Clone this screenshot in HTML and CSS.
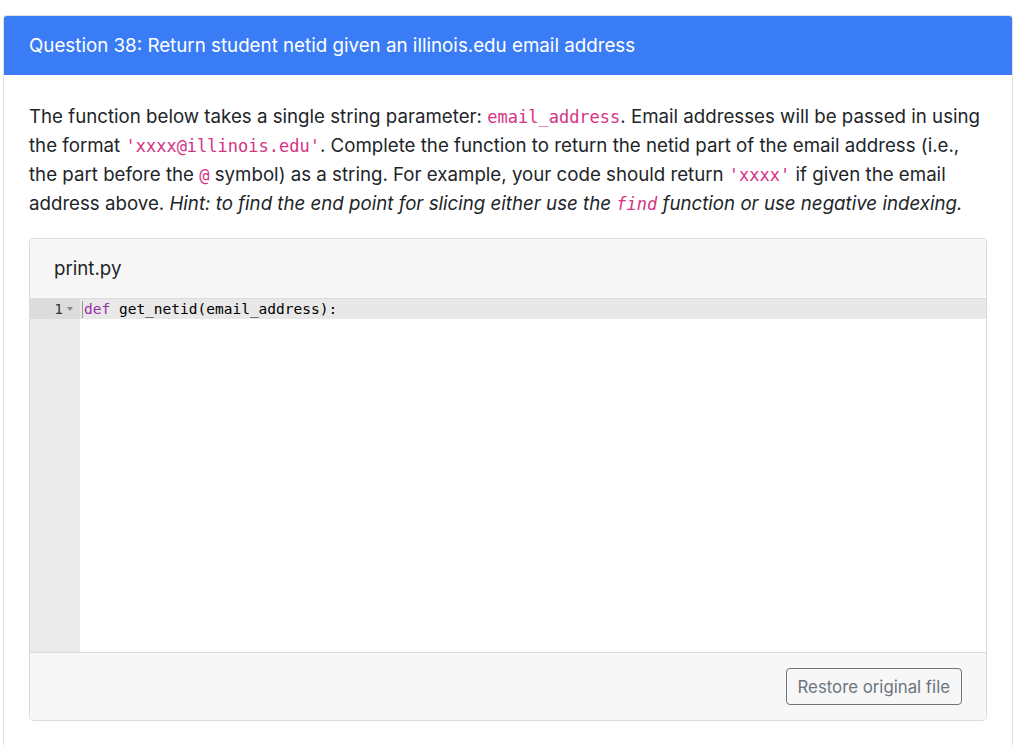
FILE: index.html
```html
<!DOCTYPE html>
<html>
<head>
<meta charset="utf-8">
<link rel="stylesheet" href="styles.css">
</head>
<body>
<div class="card">
  <div class="card-header">Question 38: Return student netid given an illinois.edu email address</div>
  <div class="card-body">
    <p class="prompt">The function below takes a single string parameter: <code>email_address</code>. Email addresses will be passed in using the format <code>'xxxx@illinois.edu'</code>. Complete the function to return the netid part of the email address (i.e., the part before the <code>@</code> symbol) as a string. For example, your code should return <code>'xxxx'</code> if given the email address above. <em>Hint: to find the end point for slicing either use the <code>find</code> function or use negative indexing.</em></p>
    <div class="file-card">
      <div class="file-header">print.py</div>
      <div class="editor">
        <div class="gutter">
          <div class="gutter-line active"><span class="num">1</span><span class="fold"></span></div>
        </div>
        <div class="lines">
          <div class="line active"><span class="cursor"></span><span class="kw">def</span> get_netid(email_address):</div>
        </div>
      </div>
      <div class="file-footer">
        <button class="btn">Restore original file</button>
      </div>
    </div>
  </div>
</div>
</body>
</html>
```
FILE: styles.css
```css
html, body {
  margin: 0;
  padding: 0;
  background: #fff;
}
body {
  padding: 15px 11px 0 3px;
  font-family: Inter, "Liberation Sans", sans-serif;
  color: #212529;
}
.card {
  border: 1px solid #dedede;
  border-bottom: none;
  border-radius: 4px 4px 0 0;
  overflow: hidden;
}
.card-header {
  background: #3a7cf5;
  color: #fff;
  height: 59px;
  display: flex;
  align-items: center;
  padding: 0 25px;
  font-size: 18.75px;
}
.card-body {
  padding: 27px 25px 24px 25px;
}
.prompt {
  margin: 0 0 20px 0;
  font-size: 18.7px;
  line-height: 29px;
}
code {
  font-family: "DejaVu Sans Mono", monospace;
  font-size: 17px;
  line-height: 1;
  color: #d63384;
}
.file-card {
  border: 1px solid #dcdcdc;
  border-radius: 4px;
  overflow: hidden;
}
.file-header {
  background: #f7f7f7;
  height: 59px;
  border-bottom: 1px solid #dcdcdc;
  display: flex;
  align-items: center;
  padding: 0 24px;
  font-size: 18.7px;
}
.editor {
  display: flex;
  height: 353px;
  background: #fff;
  font-family: "DejaVu Sans Mono", monospace;
  font-size: 14.5px;
}
.gutter {
  width: 50px;
  background: #ebebeb;
  color: #333;
}
.gutter-line {
  height: 20px;
  display: flex;
  align-items: center;
  justify-content: flex-end;
  padding-right: 7px;
}
.gutter-line.active {
  background: #dcdcdc;
}
.fold {
  width: 0;
  height: 0;
  border-left: 3px solid transparent;
  border-right: 3px solid transparent;
  border-top: 4px solid #888;
  margin-left: 4px;
}
.lines {
  flex: 1;
}
.line {
  height: 20px;
  display: flex;
  align-items: center;
  padding-left: 5px;
  white-space: pre;
  color: #000;
}
.line.active {
  background: #e8e8e8;
}
.cursor {
  width: 1px;
  height: 17px;
  background: #999;
  margin-right: 1px;
  margin-left: -3px;
}
.kw {
  color: #9a2ea6;
}
.file-footer {
  background: #f7f7f7;
  border-top: 1px solid #dcdcdc;
  height: 67px;
  display: flex;
  align-items: center;
  justify-content: flex-end;
  padding: 0 24px;
}
.btn {
  font-family: Inter, "Liberation Sans", sans-serif;
  font-size: 16.8px;
  color: #6c757d;
  background: transparent;
  border: 1px solid #6c757d;
  border-radius: 4px;
  height: 37px;
  padding: 0 11px;
}
```
